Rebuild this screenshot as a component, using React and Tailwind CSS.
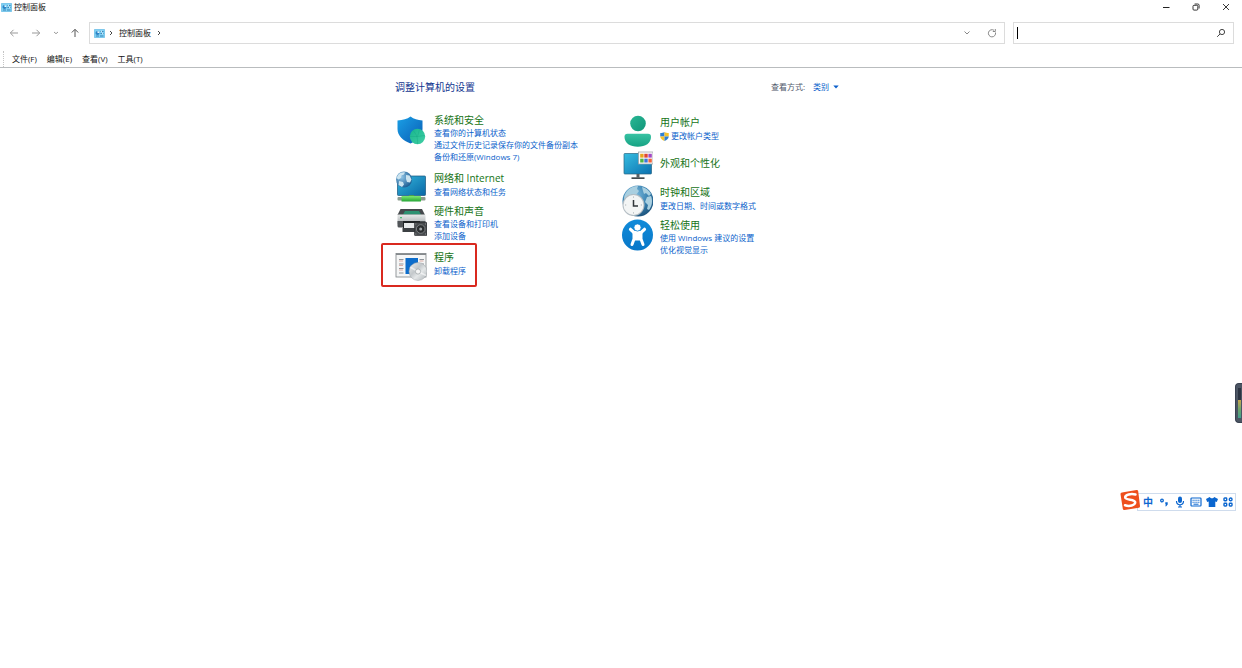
import React, { useState } from 'react';

const ControlPanelIcon = ({ className }) => (
  <svg viewBox="0 0 22 18" className={className} aria-hidden="true">
    <rect x="0.5" y="0.5" width="21" height="17" rx="1.5" fill="#7fd0f3" stroke="#4aa8da" />
    <circle cx="7" cy="8" r="4" fill="#2b84c6" />
    <path d="M7 8V4a4 4 0 0 1 4 4z" fill="#e6f7ff" />
    <path d="M13 5h2m1 0h3M13 9h4m1 0h1M4 14h6m2 0h7" stroke="#1c669f" strokeWidth="1.4" />
    <path d="M15 3.5v3M17 7.5v3" stroke="#fff" strokeWidth="1.4" />
  </svg>
);

const SecurityIcon = () => (
  <svg viewBox="0 0 32 32" className="w-8 h-8" aria-hidden="true">
    <defs>
      <linearGradient id="shield" x1="0" y1="0" x2="1" y2="1">
        <stop offset="0" stopColor="#1aa0e6" />
        <stop offset="1" stopColor="#0a5cb4" />
      </linearGradient>
      <linearGradient id="ball" x1="0" y1="0" x2="1" y2="1">
        <stop offset="0" stopColor="#17b58d" />
        <stop offset="1" stopColor="#43d0a6" />
      </linearGradient>
    </defs>
    <path d="M15.5 2.5c3.5 2.5 7 3.7 12 4v8.5c0 7-5 11.500-12 14.500C8 26.500 2.500 22 2.500 15V6.500c5.500-.3 9.500-1.500 13-4z" fill="url(#shield)" />
    <circle cx="22.500" cy="22.500" r="7.700" fill="url(#ball)" />
    <path d="M18 16.500c3 3 5 7 4.500 13.500M22.500 22.500l7.400-1M15 22.500h7.500l2-7" stroke="#14a682" strokeWidth="0.4" fill="none" />
  </svg>
);

const NetworkIcon = () => (
  <svg viewBox="0 0 32 32" className="w-8 h-8" aria-hidden="true">
    <defs>
      <linearGradient id="netScreen" x1="0" y1="0" x2="1" y2="1">
        <stop offset="0" stopColor="#35b6dc" />
        <stop offset="1" stopColor="#0867a6" />
      </linearGradient>
      <radialGradient id="netGlobe" cx="0.35" cy="0.35" r="0.7">
        <stop offset="0" stopColor="#8fc4e6" />
        <stop offset="1" stopColor="#1d5e94" />
      </radialGradient>
      <linearGradient id="cable" x1="0" y1="0" x2="0" y2="1">
        <stop offset="0" stopColor="#7de870" />
        <stop offset="1" stopColor="#24a536" />
      </linearGradient>
    </defs>
    <rect x="2.5" y="5" width="28" height="19.500" rx="0.8" fill="url(#netScreen)" stroke="#17557c" strokeWidth="0.7" />
    <path d="M14 24h5v2h-5z" fill="#4aa04e" />
    <rect x="2.5" y="26" width="28" height="3.500" rx="1" fill="#8b9c8e" />
    <rect x="6.500" y="25" width="19.500" height="5.500" rx="0.6" fill="url(#cable)" />
    <circle cx="9" cy="8.500" r="8" fill="url(#netGlobe)" />
    <path d="M3 4c2-2.500 5-3 7-2.500l-1 2-2.500 1L6 7 3.500 8.500 1.500 7zM11 4l3.500.5 2 4-1.500 3-3-.5-1-3zM4 10l4 1 1 2.500-2 2.500-3.500-2z" fill="#cbe4f0" />
  </svg>
);

const PrinterIcon = () => (
  <svg viewBox="0 0 32 32" className="w-8 h-8" aria-hidden="true">
    <defs>
      <linearGradient id="printer" x1="0" y1="0" x2="0" y2="1">
        <stop offset="0" stopColor="#e9ebeb" />
        <stop offset="1" stopColor="#a6abae" />
      </linearGradient>
    </defs>
    <path d="M5.500 4h21.500l3 6H2.500z" fill="#45494c" />
    <path d="M10 6h14l2 3.500H8z" fill="#2d9272" />
    <rect x="2.500" y="9.500" width="28" height="10" rx="1" fill="url(#printer)" />
    <rect x="5" y="12" width="2" height="1.300" fill="#4bbf77" />
    <path d="M2.500 16h28V21a1.500 1.500 0 0 1-1.500 1.500H4A1.500 1.500 0 0 1 2.500 21z" fill="#515558" />
    <path d="M8 16h17v7H8z" fill="#202426" />
    <path d="M9 18h15v5.500H9z" fill="#e8eaeb" />
    <path d="M7.500 23H25v4H7.500z" fill="#3c4043" />
    <rect x="19.500" y="17.500" width="12.500" height="13" rx="0.6" fill="#484b4e" stroke="#26292b" strokeWidth="0.6" />
    <circle cx="25.700" cy="24" r="4.300" fill="#2b2e30" stroke="#8a8e91" strokeWidth="0.8" />
    <circle cx="25.700" cy="24" r="1.500" fill="#a4a8ab" />
    <path d="M20.500 19h.8M30 19h.8M20.500 29h.8M30 29h.8" stroke="#b6babd" strokeWidth="0.8" />
  </svg>
);

const ProgramsIcon = () => (
  <svg viewBox="0 0 32 32" className="w-8 h-8" aria-hidden="true">
    <defs>
      <linearGradient id="disc" x1="0" y1="0" x2="1" y2="1">
        <stop offset="0" stopColor="#f0f1f1" />
        <stop offset="0.4" stopColor="#c3c8cb" />
        <stop offset="0.6" stopColor="#e4e7e8" />
        <stop offset="1" stopColor="#abb1b5" />
      </linearGradient>
    </defs>
    <rect x="1" y="3.500" width="30" height="23.500" fill="#f5f6f6" stroke="#7c8286" strokeWidth="0.8" />
    <path d="M1 3.500h30v1.500H1z" fill="#85898c" />
    <path d="M4 9.500h4.500M4 14h4.500M4 18.500h4.500M4 23h4.500M24.500 9.500h4.500M24.500 14h4.500" stroke="#8f959a" />
    <path d="M4 11h4M4 15.500h4M4 20h4M24.500 11h4" stroke="#d69c93" strokeWidth="0.8" />
    <rect x="10.500" y="8" width="12.500" height="16" fill="#0d6dcb" />
    <circle cx="23" cy="21.500" r="9" fill="url(#disc)" stroke="#a0a6aa" strokeWidth="0.5" />
    <path d="M23 21.500l-8-4.500M23 21.500l8 4" stroke="#fff" strokeWidth="1.5" opacity="0.6" />
    <circle cx="23" cy="21.500" r="2.600" fill="#f5f6f6" stroke="#9aa0a4" strokeWidth="0.7" />
  </svg>
);

const UserIcon = () => (
  <svg viewBox="0 0 32 32" className="w-8 h-8" aria-hidden="true">
    <defs>
      <linearGradient id="user" x1="0" y1="0" x2="1" y2="1">
        <stop offset="0" stopColor="#2ab895" />
        <stop offset="1" stopColor="#109579" />
      </linearGradient>
      <linearGradient id="userBody" x1="0" y1="0" x2="0" y2="1">
        <stop offset="0" stopColor="#38c2a3" />
        <stop offset="1" stopColor="#15a283" />
      </linearGradient>
    </defs>
    <circle cx="17" cy="8.500" r="7.800" fill="url(#user)" />
    <path d="M6.500 18.800h20.500a3 3 0 0 1 3 3c0 6.500-5.500 10-13.200 10S3.500 28.300 3.500 21.800a3 3 0 0 1 3-3z" fill="url(#userBody)" />
  </svg>
);

const PersonalizeIcon = () => (
  <svg viewBox="0 0 32 32" className="w-8 h-8" aria-hidden="true">
    <defs>
      <linearGradient id="screen" x1="0" y1="0" x2="1" y2="1">
        <stop offset="0" stopColor="#36bde0" />
        <stop offset="1" stopColor="#0b70b0" />
      </linearGradient>
    </defs>
    <rect x="3" y="3.500" width="27.500" height="20.500" rx="0.8" fill="url(#screen)" stroke="#286583" strokeWidth="0.7" />
    <path d="M15.500 24h3v3.500h-3z" fill="#596065" />
    <path d="M10.500 27.300h13V29h-13z" fill="#42494e" />
    <rect x="17.500" y="2" width="14.500" height="12" fill="#fafafa" stroke="#989da1" strokeWidth="0.7" />
    <rect x="19.200" y="3.800" width="3.400" height="3.800" fill="#e8a41c" />
    <rect x="23.300" y="3.800" width="3.400" height="3.800" fill="#e04731" />
    <rect x="27.400" y="3.800" width="3.400" height="3.800" fill="#a248c4" />
    <rect x="19.200" y="8.700" width="3.400" height="3.800" fill="#4fb542" />
    <rect x="23.300" y="8.700" width="3.400" height="3.800" fill="#3f74da" />
    <rect x="27.400" y="8.700" width="3.400" height="3.800" fill="#f0643a" />
  </svg>
);

const ClockIcon = () => (
  <svg viewBox="0 0 32 32" className="w-8 h-8" aria-hidden="true">
    <defs>
      <radialGradient id="globe" cx="0.4" cy="0.3" r="0.75">
        <stop offset="0" stopColor="#7dbce0" />
        <stop offset="0.6" stopColor="#377fae" />
        <stop offset="1" stopColor="#1b5078" />
      </radialGradient>
    </defs>
    <circle cx="17" cy="16" r="15.500" fill="url(#globe)" />
    <path d="M6 6c3-3.500 7-5 11-5l-1 3 2 2-3 4-4-1-4 4-4 1c0-3 1-5.500 3-8zM21 2c4 1 7 3.500 9 7l-2 2-3-3-2 1-1-3zM26 12l4-1c2 5 1 10-2 14l-2-1 1-4-3-3z" fill="#a9cfe0" />
    <circle cx="12.500" cy="20" r="11" fill="#b5bec4" />
    <circle cx="12.500" cy="20" r="10" fill="#f3f5f5" />
    <path d="M12.500 15v6h4.500" stroke="#30363a" strokeWidth="1.5" fill="none" />
    <path d="M12.500 11.500v1.200M12.500 27.300v1.200M4 20h1.200M19.800 20h1.200" stroke="#9ca4aa" strokeWidth="0.8" />
  </svg>
);

const AccessIcon = () => (
  <svg viewBox="0 0 32 32" className="w-8 h-8" aria-hidden="true">
    <defs>
      <linearGradient id="access" x1="0" y1="0" x2="0" y2="1">
        <stop offset="0" stopColor="#118bd9" />
        <stop offset="1" stopColor="#0877c8" />
      </linearGradient>
    </defs>
    <circle cx="16.500" cy="16" r="15.500" fill="url(#access)" />
    <path d="M9.500 10.300l4 3.700h6l4-3.700" stroke="#fff" strokeWidth="3.200" strokeLinecap="round" strokeLinejoin="round" fill="none" />
    <path d="M13 13.500h7v6.500l2 5.500M13 13.500v6.500l-2 5.500" stroke="#fff" strokeWidth="3" strokeLinecap="round" strokeLinejoin="round" fill="none" />
    <path d="M13 14h7v7.500h-7z" fill="#fff" />
    <circle cx="16.500" cy="8.500" r="3.600" fill="#fff" stroke="#1385d3" strokeWidth="0.8" />
  </svg>
);

const UacShield = () => (
  <svg viewBox="0 0 18 18" className="w-[9px] h-[9px]" aria-hidden="true">
    <path d="M9 0C6.500 1.500 4 2 0.500 2v7H9z" fill="#2d7fd3" />
    <path d="M9 0c2.500 1.500 5 2 8.500 2v7H9z" fill="#f3c22c" />
    <path d="M0.500 9H9v9C4.500 16.500 1 13.500 0.500 9z" fill="#f3c22c" />
    <path d="M17.500 9H9v9c4.500-1.500 8-4.500 8.500-9z" fill="#2d7fd3" />
  </svg>
);

const leftColumn = [
  { title: '系统和安全', Icon: SecurityIcon, links: ['查看你的计算机状态', '通过文件历史记录保存你的文件备份副本', '备份和还原(Windows 7)'] },
  { title: '网络和 Internet', Icon: NetworkIcon, links: ['查看网络状态和任务'], space: 'mt-2' },
  { title: '硬件和声音', Icon: PrinterIcon, links: ['查看设备和打印机', '添加设备'], space: 'mt-0.5' },
  { title: '程序', Icon: ProgramsIcon, links: ['卸载程序'], space: 'mt-2', marked: true },
];

const rightColumn = [
  { title: '用户帐户', Icon: UserIcon, links: ['更改帐户类型'], shield: true },
  { title: '外观和个性化', Icon: PersonalizeIcon, links: [], space: 'mt-[3px]' },
  { title: '时钟和区域', Icon: ClockIcon, links: ['更改日期、时间或数字格式'], space: 'mt-[3px]' },
  { title: '轻松使用', Icon: AccessIcon, links: ['使用 Windows 建议的设置', '优化视觉显示'], space: 'mt-0.5' },
];

function Category({ title, Icon, links, space = '', shield, marked }) {
  const many = links.length > 1;
  return (
    <section className={`relative flex gap-[7px] ${space}`}>
      <div className="shrink-0"><Icon /></div>
      <div className={`whitespace-nowrap ${links.length === 0 ? 'self-center pb-1.5' : ''}`}>
        <h2 className={`text-[10px] text-[#167316] ${many ? 'leading-[13px]' : 'leading-[14px]'}`}>
          <a href="#" className="hover:underline">{title}</a>
        </h2>
        {links.map((text) => (
          <a
            key={text}
            href="#"
            className={`flex items-center gap-0.5 text-[8px] text-[#0a5fcb] hover:underline ${many ? 'leading-[12px]' : 'leading-[14px]'}`}
          >
            {shield && <UacShield />}
            {text}
          </a>
        ))}
      </div>
      {marked && (
        <div className="absolute -left-3.5 -top-[7px] w-24 h-11 border-2 border-[#d9291f] rounded-xs pointer-events-none" />
      )}
    </section>
  );
}

function TitleBar() {
  return (
    <header className="flex items-center justify-between h-3.5 pl-px pr-[11px]">
      <div className="flex items-center gap-0.5">
        <ControlPanelIcon className="w-[11px] h-[9px]" />
        <h1 className="text-[8px] leading-[14px]">控制面板</h1>
      </div>
      <div className="flex items-center gap-5">
        <button aria-label="最小化" className="w-[10px] flex justify-center">
          <svg viewBox="0 0 8 8" className="w-2 h-2"><path d="M1 4.500h6.500" stroke="#222" /></svg>
        </button>
        <button aria-label="还原" className="w-[10px] flex justify-center">
          <svg viewBox="0 0 8 8" className="w-2 h-2" fill="none" stroke="#222" strokeWidth="0.9">
            <rect x="1" y="2.300" width="4.800" height="4.800" rx="1" />
            <path d="M2.600 1h3.200a1.300 1.300 0 0 1 1.300 1.300v3.200" />
          </svg>
        </button>
        <button aria-label="关闭" className="w-[10px] flex justify-center">
          <svg viewBox="0 0 8 8" className="w-2 h-2"><path d="M1 1l6 6M7 1L1 7" stroke="#222" strokeWidth="0.9" /></svg>
        </button>
      </div>
    </header>
  );
}

function Breadcrumb() {
  return (
    <svg viewBox="0 0 4 6" className="w-1 h-1.5" aria-hidden="true">
      <path d="M1 1l2 2-2 2" stroke="#333" strokeWidth="0.9" fill="none" />
    </svg>
  );
}

function NavBar() {
  const [query, setQuery] = useState('');
  return (
    <div className="flex items-center mt-2 pl-[3px] pr-2">
      <button aria-label="后退" className="w-[22px] flex justify-center">
        <svg viewBox="0 0 10 10" className="w-2.5 h-2.5" fill="none" stroke="#999"><path d="M9 5H1.500M4.500 1.800L1.300 5l3.200 3.200" /></svg>
      </button>
      <button aria-label="前进" className="w-[22px] flex justify-center">
        <svg viewBox="0 0 10 10" className="w-2.5 h-2.5" fill="none" stroke="#999"><path d="M1 5h7.500M5.500 1.800L8.700 5 5.500 8.200" /></svg>
      </button>
      <button aria-label="最近浏览的位置" className="w-[18px] flex justify-center">
        <svg viewBox="0 0 6 4" className="w-1.5 h-1" fill="none" stroke="#999"><path d="M1 1l2 1.700L5 1" /></svg>
      </button>
      <button aria-label="向上" className="w-5 flex justify-center">
        <svg viewBox="0 0 10 10" className="w-2.5 h-2.5" fill="none" stroke="#555"><path d="M5 9V1.500M1.800 4.500L5 1.300l3.200 3.200" /></svg>
      </button>
      <nav aria-label="地址" className="flex-1 min-w-0 ml-1 h-[22px] border border-[#dcdcdc] flex items-center pl-1 pr-[7px]">
        <ControlPanelIcon className="w-[11px] h-[9px] mr-1" />
        <Breadcrumb />
        <a href="#" className="mx-1.5 text-[8px] leading-[14px]">控制面板</a>
        <Breadcrumb />
        <button aria-label="展开地址栏" className="ml-auto">
          <svg viewBox="0 0 8 6" className="w-2 h-1.5" fill="none" stroke="#888"><path d="M1.500 1.500L4 4l2.500-2.500" /></svg>
        </button>
        <button aria-label="刷新" className="ml-4">
          <svg viewBox="0 0 10 10" className="w-2.5 h-2.5" fill="none" stroke="#888">
            <path d="M8.500 4.500A3.600 3.600 0 1 1 7 2.300M8.300 1v2.500H5.800" />
          </svg>
        </button>
      </nav>
      <div className="ml-2 w-[221px] h-[22px] border border-[#dcdcdc] flex items-center pl-[3px] pr-[7px]">
        {query === '' && <span className="w-px h-3 bg-black" />}
        <input
          type="text"
          aria-label="搜索控制面板"
          value={query}
          onChange={(e) => setQuery(e.target.value)}
          className="flex-1 min-w-0 h-4 text-[8px] outline-none"
        />
        <button aria-label="搜索">
          <svg viewBox="0 0 10 10" className="w-2.5 h-2.5" fill="none" stroke="#444">
            <circle cx="6" cy="4" r="2.600" />
            <path d="M4 6L1.200 8.800" />
          </svg>
        </button>
      </div>
    </div>
  );
}

function MenuBar() {
  return (
    <nav aria-label="菜单" className="mt-[7px] h-[17px] pl-[3px] flex border-b border-[#b9bcbe]">
      <span className="h-full border-l border-dotted border-[#c4c4c4] mr-[3px]" />
      {['文件(F)', '编辑(E)', '查看(V)', '工具(T)'].map((label) => (
        <button key={label} className="px-[5px] text-[8px] leading-[16px]">{label}</button>
      ))}
    </nav>
  );
}

function ImeToolbar() {
  return (
    <div className="fixed right-1.5 top-[489px] flex items-center text-[#0b66cf]">
      <svg viewBox="0 0 22 22" className="relative z-10 w-[22px] h-[22px] -mr-1" aria-hidden="true">
        <path d="M3 3.500L17.500 1a1.500 1.500 0 0 1 1.700 1.200L21 17a1.500 1.500 0 0 1-1.200 1.700L5.500 21a1.500 1.500 0 0 1-1.700-1.200L1.500 5.200A1.500 1.500 0 0 1 3 3.500z" fill="#ee4f1d" />
        <path d="M16.500 5.500C12 4.500 6 5.500 6.200 8.500c.2 3 9.800 1.500 10 4.700.2 3.300-6 4.500-10.200 3" stroke="#fff" strokeWidth="2.5" fill="none" strokeLinecap="round" />
      </svg>
      <div className="h-[18px] pl-1 pr-px mt-1 flex items-center gap-1 border border-[#cfdced] bg-white">
        <button className="w-3 h-3 text-[10px] leading-[12px] font-bold" aria-label="中文输入">中</button>
        <button className="w-3 h-3 flex justify-center items-center" aria-label="标点">
          <svg viewBox="0 0 10 10" className="w-2.5 h-2.5">
            <circle cx="3" cy="3.500" r="1.300" fill="none" stroke="currentColor" strokeWidth="1.3" />
            <path d="M6.300 5.300h2.400v2.200L7.200 9.300H6.200l.8-1.800h-.7z" fill="currentColor" />
          </svg>
        </button>
        <button className="w-3 h-3 flex justify-center items-center" aria-label="语音">
          <svg viewBox="0 0 10 12" className="w-2.5 h-3">
            <rect x="3" y="0.500" width="4" height="6.500" rx="2" fill="currentColor" />
            <path d="M1.500 5c0 5 7 5 7 0M5 8.700V11M3 11h4" fill="none" stroke="currentColor" strokeWidth="1.2" />
          </svg>
        </button>
        <button className="w-3 h-3 flex justify-center items-center" aria-label="软键盘">
          <svg viewBox="0 0 12 10" className="w-3 h-2.5" fill="none" stroke="currentColor">
            <rect x="1" y="1" width="10" height="8" rx="0.8" strokeWidth="1.2" />
            <path d="M2.500 3.200h7M2.500 5.200h7" strokeDasharray="1.2 0.7" strokeWidth="1.1" />
            <path d="M3.500 7.200h5" />
          </svg>
        </button>
        <button className="w-3 h-3 flex justify-center items-center" aria-label="皮肤">
          <svg viewBox="0 0 12 12" className="w-3 h-3">
            <path d="M3.800 1C4.500 2.800 7.500 2.800 8.200 1L12 3l-1.200 3-1.500-.4V11H2.700V5.600L1.200 6 0 3z" fill="currentColor" />
          </svg>
        </button>
        <button className="w-3 h-3 flex justify-center items-center" aria-label="工具箱">
          <svg viewBox="0 0 10 10" className="w-2.5 h-2.5" fill="none" stroke="currentColor" strokeWidth="1.4">
            <rect x="1" y="1" width="2.700" height="2.700" rx="0.7" />
            <rect x="6.300" y="1" width="2.700" height="2.700" rx="1.3" />
            <rect x="1" y="6.300" width="2.700" height="2.700" rx="0.7" />
            <rect x="6.300" y="6.300" width="2.700" height="2.700" rx="0.7" />
          </svg>
        </button>
      </div>
    </div>
  );
}

function LevelMeter() {
  return (
    <div className="fixed right-0 top-[383px] w-[7px] h-10 rounded-l-sm bg-[#4b5563] border border-r-0 border-[#394150] flex flex-col justify-end items-center py-1">
      <div className="w-[3px] h-[30px] bg-[#2c3442] flex items-end">
        <div className="w-full h-[18px] bg-linear-to-b from-[#c5a64d] via-[#6fa56a] to-[#3f9f8c]" />
      </div>
    </div>
  );
}

export default function App() {
  return (
    <div className="min-h-screen bg-white text-[#111] font-['Open_Sans','Noto_Sans_CJK_SC',sans-serif]">
      <TitleBar />
      <NavBar />
      <MenuBar />
      <main className="max-w-[452px] mx-auto pt-3">
        <div className="flex items-center justify-between pr-2">
          <h2 className="text-[10px] leading-[14px] text-[#12368f]">调整计算机的设置</h2>
          <div className="flex items-center text-[8px] leading-[14px]">
            <label htmlFor="view" className="mr-2 text-[#50586a]">查看方式:</label>
            <div className="relative">
              <select id="view" defaultValue="category" className="appearance-none block w-[26px] h-3.5 text-[#0a5fcb] outline-none">
                <option value="category">类别</option>
                <option value="large">大图标</option>
                <option value="small">小图标</option>
              </select>
              <svg viewBox="0 0 6 4" className="absolute right-0 top-[5px] w-1.5 h-1 pointer-events-none">
                <path d="M0.300 0.500h5.400L3 3.500z" fill="#0a5fcb" />
              </svg>
            </div>
          </div>
        </div>
        <div className="grid grid-cols-2 mt-5">
          <div>
            {leftColumn.map((c) => <Category key={c.title} {...c} />)}
          </div>
          <div className="pt-px">
            {rightColumn.map((c) => <Category key={c.title} {...c} />)}
          </div>
        </div>
      </main>
      <ImeToolbar />
      <LevelMeter />
    </div>
  );
}
